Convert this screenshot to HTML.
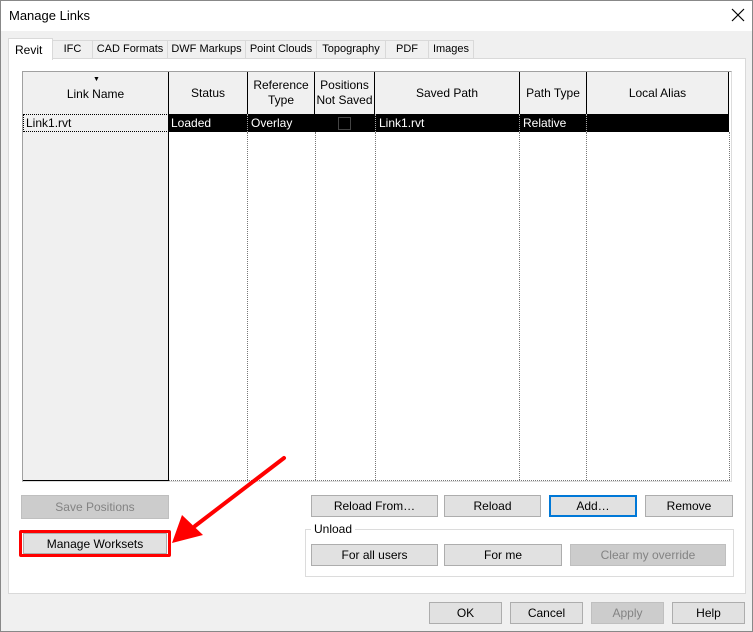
<!DOCTYPE html>
<html><head><style>
*{box-sizing:border-box;margin:0;padding:0}
body{width:753px;height:632px;overflow:hidden;font-family:"Liberation Sans",sans-serif;font-size:12px;color:#000;background:#f0f0f0;position:relative}
.a{position:absolute;white-space:nowrap}
.btn{position:absolute;background:#e1e1e1;border:1px solid #adadad;text-align:center;font-size:12px;display:flex;align-items:center;justify-content:center;white-space:nowrap}
.dis{background:#ccc;border-color:#bfbfbf;color:#838383}
.hd{position:absolute;top:72px;height:42px;border-right:1px solid #000;display:flex;align-items:center;justify-content:center;text-align:center;line-height:15px;background:#f0f0f0}
.vd{position:absolute;top:132px;height:348px;border-left:1px dotted #777}
.cell{position:absolute;top:114px;height:18px;color:#fff;line-height:18px;padding-left:3px;border-left:1px dotted #aaa;white-space:nowrap}
.tab{position:absolute;top:40px;height:18px;border:1px solid #d9d9d9;border-bottom:none;background:#f0f0f0;line-height:17px;text-align:center;white-space:nowrap;overflow:hidden;font-size:11px}
</style></head><body>
<div class="a" style="left:0;top:0;width:753px;height:632px;border:1px solid #888"></div>
<div class="a" style="left:1px;top:1px;width:751px;height:30px;background:#fff"></div>
<div class="a" style="left:9px;top:8px;font-size:13px">Manage Links</div>
<svg class="a" style="left:731px;top:8px" width="14" height="14"><path d="M1 1L13 13M13 1L1 13" stroke="#000" stroke-width="1.2"/></svg>
<div class="a" style="left:8px;top:58px;width:738px;height:536px;background:#fff;border:1px solid #d9d9d9"></div>
<div class="tab" style="left:52px;width:41px">IFC</div>
<div class="tab" style="left:92px;width:76px">CAD Formats</div>
<div class="tab" style="left:167px;width:79px">DWF Markups</div>
<div class="tab" style="left:245px;width:72px">Point Clouds</div>
<div class="tab" style="left:316px;width:70px">Topography</div>
<div class="tab" style="left:385px;width:44px">PDF</div>
<div class="tab" style="left:428px;width:46px">Images</div>
<div class="a" style="left:8px;top:38px;width:45px;height:22px;background:#fff;border:1px solid #d9d9d9;border-bottom:none;padding:4px 0 0 6px">Revit</div>
<div class="a" style="left:22px;top:71px;width:710px;height:411px;border:1px solid #a0a0a0;border-right-color:#ddd;border-bottom-color:#ddd;background:#fff"></div>
<div class="a" style="left:23px;top:72px;width:706px;height:42px;background:#f0f0f0;border-bottom:1px solid #000"></div>
<div class="hd" style="left:23px;width:146px;padding-top:2px">Link Name</div>
<div class="a" style="left:93px;top:76px;font-size:7px">▼</div>
<div class="hd" style="left:169px;width:79px">Status</div>
<div class="hd" style="left:248px;width:67px">Reference<br>Type</div>
<div class="hd" style="left:315px;width:60px">Positions<br>Not Saved</div>
<div class="hd" style="left:375px;width:145px">Saved Path</div>
<div class="hd" style="left:520px;width:67px">Path Type</div>
<div class="hd" style="left:587px;width:142px">Local Alias</div>
<div class="a" style="left:23px;top:114px;width:146px;height:367px;background:#f0f0f0;border-right:1px solid #000;border-bottom:1px solid #000"></div>
<div class="a" style="left:23px;top:114px;width:146px;height:18px;border:1px dotted #000;line-height:16px;padding-left:2px">Link1.rvt</div>
<div class="a" style="left:169px;top:114px;width:560px;height:18px;background:#000"></div>
<div class="cell" style="left:168px;border-left:none">Loaded</div>
<div class="cell" style="left:247px">Overlay</div>
<div class="a" style="left:338px;top:117px;width:13px;height:13px;border:1px solid #444"></div>
<div class="cell" style="left:375px">Link1.rvt</div>
<div class="cell" style="left:519px">Relative</div>
<div class="a" style="left:586px;top:114px;height:18px;border-left:1px dotted #aaa"></div>
<div class="vd" style="left:247px"></div><div class="vd" style="left:315px"></div><div class="vd" style="left:375px"></div><div class="vd" style="left:519px"></div><div class="vd" style="left:586px"></div><div class="vd" style="left:729px"></div>
<div class="a" style="left:169px;top:480px;width:561px;border-top:1px dotted #777"></div>
<div class="btn dis" style="left:21px;top:495px;width:148px;height:24px">Save Positions</div>
<div class="a" style="left:19px;top:530px;width:152px;height:27px;border:3px solid #f00;border-radius:2px"></div>
<div class="btn" style="left:23px;top:533px;width:144px;height:21px">Manage Worksets</div>
<div class="btn" style="left:311px;top:495px;width:127px;height:22px">Reload From…</div>
<div class="btn" style="left:444px;top:495px;width:97px;height:22px">Reload</div>
<div class="btn" style="left:549px;top:495px;width:88px;height:22px;border:2px solid #0078d7">Add…</div>
<div class="btn" style="left:645px;top:495px;width:88px;height:22px">Remove</div>
<div class="a" style="left:305px;top:529px;width:429px;height:48px;border:1px solid #dcdcdc"></div>
<div class="a" style="left:311px;top:522px;background:#fff;padding:0 3px">Unload</div>
<div class="btn" style="left:311px;top:544px;width:127px;height:22px">For all users</div>
<div class="btn" style="left:444px;top:544px;width:118px;height:22px">For me</div>
<div class="btn dis" style="left:570px;top:544px;width:156px;height:22px">Clear my override</div>
<div class="btn" style="left:429px;top:602px;width:73px;height:22px">OK</div>
<div class="btn" style="left:510px;top:602px;width:73px;height:22px">Cancel</div>
<div class="btn dis" style="left:591px;top:602px;width:73px;height:22px">Apply</div>
<div class="btn" style="left:672px;top:602px;width:73px;height:22px">Help</div>
<svg class="a" style="left:0;top:0" width="753" height="632"><line x1="284" y1="458" x2="195" y2="526" stroke="#f00" stroke-width="4" stroke-linecap="round"/><polygon points="172,543 182,515 203,535" fill="#f00"/></svg>
</body></html>
